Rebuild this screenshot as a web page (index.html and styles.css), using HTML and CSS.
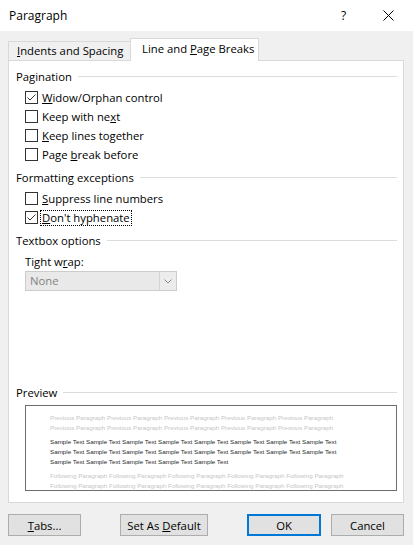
FILE: index.html
```html
<!DOCTYPE html>
<html>
<head>
<meta charset="utf-8">
<link rel="stylesheet" href="styles.css">
</head>
<body>
<div class="dialog">
  <header class="titlebar">
    <span class="title">Paragraph</span>
    <span class="help">?</span>
    <span class="close"><svg width="11" height="11" viewBox="0 0 11 11"><path d="M0.5 0.5 L10.5 10.5 M10.5 0.5 L0.5 10.5" stroke="#000" stroke-width="1" fill="none"/></svg></span>
  </header>
  <div class="content">
    <div class="tabs">
      <div class="tab"><u>I</u>ndents and Spacing</div>
      <div class="tab active">Line and <u>P</u>age Breaks</div>
    </div>
    <div class="panel">
      <div class="group-label first"><span>Pagination</span></div>
      <div class="check"><span class="box"><svg width="11" height="11" viewBox="0 0 11 11"><path d="M1.5 5.5 L4 8 L9.5 2.5" stroke="#333" stroke-width="1" fill="none"/></svg></span><span class="text"><u>W</u>idow/Orphan control</span></div>
      <div class="check"><span class="box"></span><span class="text">Keep with ne<u>x</u>t</span></div>
      <div class="check"><span class="box"></span><span class="text"><u>K</u>eep lines together</span></div>
      <div class="check"><span class="box"></span><span class="text">Page <u>b</u>reak before</span></div>
      <div class="group-label"><span>Formatting exceptions</span></div>
      <div class="check"><span class="box"></span><span class="text"><u>S</u>uppress line numbers</span></div>
      <div class="check"><span class="box"><svg width="11" height="11" viewBox="0 0 11 11"><path d="M1.5 5.5 L4 8 L9.5 2.5" stroke="#333" stroke-width="1" fill="none"/></svg></span><span class="text focus"><u>D</u>on't hyphenate</span></div>
      <div class="group-label"><span>Textbox options</span></div>
      <div class="field-label">Tight w<u>r</u>ap:</div>
      <div class="select">
        <span class="select-value">None</span>
        <span class="select-arrow"><svg width="8" height="5" viewBox="0 0 8 5"><path d="M0.5 0.5 L4 4 L7.5 0.5" stroke="#8a8a8a" stroke-width="1" fill="none"/></svg></span>
      </div>
      <div class="spacer"></div>
      <div class="group-label preview-label"><span>Preview</span></div>
      <div class="preview">
        <div class="para prev">
          <div class="line">Previous Paragraph Previous Paragraph Previous Paragraph Previous Paragraph Previous Paragraph</div>
          <div class="line">Previous Paragraph Previous Paragraph Previous Paragraph Previous Paragraph Previous Paragraph</div>
        </div>
        <div class="para sample">
          <div class="line">Sample Text Sample Text Sample Text Sample Text Sample Text Sample Text Sample Text Sample Text</div>
          <div class="line">Sample Text Sample Text Sample Text Sample Text Sample Text Sample Text Sample Text Sample Text</div>
          <div class="line">Sample Text Sample Text Sample Text Sample Text Sample Text</div>
        </div>
        <div class="para next">
          <div class="line">Following Paragraph Following Paragraph Following Paragraph Following Paragraph Following Paragraph</div>
          <div class="line">Following Paragraph Following Paragraph Following Paragraph Following Paragraph Following Paragraph</div>
        </div>
      </div>
    </div>
    <div class="buttons">
      <button class="btn btn-tabs"><u>T</u>abs...</button>
      <button class="btn btn-default">Set As <u>D</u>efault</button>
      <button class="btn btn-ok">OK</button>
      <button class="btn btn-cancel">Cancel</button>
    </div>
  </div>
</div>
</body>
</html>
```

FILE: styles.css
```css
* { box-sizing: border-box; }
html, body { margin: 0; padding: 0; }
body {
  width: 413px;
  height: 545px;
  overflow: hidden;
  background: #f0f0f0;
  font-family: "Open Sans", "Noto Sans", sans-serif;
  font-size: 11.3px;
  color: #000;
}
u { text-decoration: underline; text-underline-offset: 1px; }

.dialog { width: 413px; height: 545px; display: flex; flex-direction: column; }

.titlebar {
  height: 31px;
  background: #fff;
  display: flex;
  align-items: center;
  padding-left: 9px;
  flex-shrink: 0;
}
.title { flex: 1; font-size: 12px; }
.help { font-size: 12px; width: 10px; margin-right: 32px; }
.close { width: 11px; height: 11px; margin-right: 19px; display: flex; }

.content { padding: 7px 9px 0 8px; }

.tabs { display: flex; align-items: flex-end; height: 22px; }
.tab {
  height: 19px;
  line-height: 17px;
  padding-left: 8px;
  border: 1px solid #d9d9d9;
  border-bottom: none;
  background: #f0f0f0;
  white-space: nowrap;
}
.tab:first-child { width: 122px; border-right: none; }
.tab.active {
  width: 129px;
  height: 23px;
  margin-bottom: -1px;
  padding-left: 11px;
  line-height: 20px;
  background: #fff;
  position: relative;
  z-index: 1;
}

.panel {
  height: 443px;
  background: #fff;
  border: 1px solid #d9d9d9;
  padding: 6px 6px 11px 7px;
  display: flex;
  flex-direction: column;
}

.group-label {
  height: 19px;
  display: flex;
  align-items: center;
  margin-top: 4px;
  margin-bottom: 2px;
}
.group-label.first { margin-top: 0; }
.group-label::after {
  content: "";
  flex: 1;
  height: 1px;
  background: #dcdcdc;
  margin-left: 6px;
}

.check {
  height: 19px;
  display: flex;
  align-items: center;
  padding-left: 9px;
}
.box {
  width: 13px;
  height: 13px;
  border: 1px solid #333;
  background: #fff;
  margin-right: 4px;
  display: flex;
  flex-shrink: 0;
}
.text { padding: 0 1px; line-height: 14px; border: 1px solid transparent; margin-left: -2px; }
.text.focus { border: 1px dotted #000; }

.field-label { height: 19px; line-height: 19px; padding-left: 9px; }

.select {
  margin-left: 9px;
  width: 152px;
  height: 20px;
  border: 1px solid #cccccc;
  background: #e9e9e9;
  display: flex;
}
.select-value { flex: 1; color: #838383; line-height: 18px; padding-left: 4px; }
.select-arrow {
  width: 17px;
  border-left: 1px solid #d4d4d4;
  background: #ececec;
  display: flex;
  align-items: center;
  justify-content: center;
}

.spacer { flex: 1; }
.preview-label { margin-bottom: 3px; }

.preview {
  margin-left: 9px;
  width: 372px;
  height: 86px;
  border: 1px solid #6e6e6e;
  background: #fff;
  padding: 7px 0 0 24px;
  overflow: hidden;
  font-family: "Liberation Sans", sans-serif;
  font-size: 6.25px;
}
.para { margin-bottom: 4px; }
.line { height: 10px; line-height: 10px; white-space: nowrap; }
.prev .line, .next .line { color: #c6c6c6; }
.sample .line { color: #2a2a2a; }

.buttons { display: flex; margin-top: 11px; }
.btn {
  height: 22px;
  width: 73px;
  padding: 0;
  font-family: inherit;
  font-size: 11.3px;
  color: #000;
  background: #e1e1e1;
  border: 1px solid #adadad;
  border-radius: 0;
}
.btn-default { width: 88px; margin-left: 39px; }
.btn-ok { width: 74px; margin-left: 39px; border: 2px solid #0078d7; }
.btn-cancel { margin-left: 10px; }
```
